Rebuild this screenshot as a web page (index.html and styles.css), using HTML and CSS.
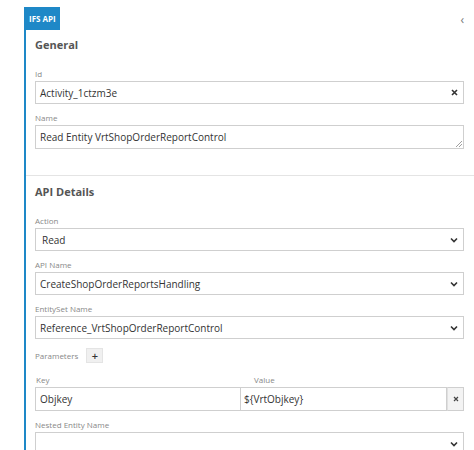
FILE: index.html
```html
<!DOCTYPE html>
<html>
<head>
<meta charset="utf-8">
<link rel="stylesheet" href="styles.css">
</head>
<body>
<div class="panel">
  <div class="topbar">
    <div class="tab">IFS API</div>
    <div class="collapse">‹</div>
  </div>
  <div class="section">
    <h2>General</h2>
    <div class="field">
      <div class="label">Id</div>
      <div class="input clearable">
        <span class="value">Activity_1ctzm3e</span>
        <svg class="clear" width="7" height="7" viewBox="0 0 7 7"><path d="M1 1L6 6M6 1L1 6" stroke="#333" stroke-width="1.6"/></svg>
      </div>
    </div>
    <div class="field">
      <div class="label">Name</div>
      <div class="input textarea">
        <span class="value">Read Entity VrtShopOrderReportControl</span>
        <svg class="grip" width="7" height="7" viewBox="0 0 7 7"><path d="M1 7L7 1M4 7L7 4" stroke="#888" stroke-width="0.8"/></svg>
      </div>
    </div>
  </div>
  <div class="section last">
    <h2>API Details</h2>
    <div class="field">
      <div class="label">Action</div>
      <div class="input select">
        <span class="value pad">Read</span>
        <svg class="chev" width="8" height="6" viewBox="0 0 8 6"><path d="M1 1.5L4 4.5L7 1.5" fill="none" stroke="#333" stroke-width="1.6"/></svg>
      </div>
    </div>
    <div class="field">
      <div class="label">API Name</div>
      <div class="input select">
        <span class="value">CreateShopOrderReportsHandling</span>
        <svg class="chev" width="8" height="6" viewBox="0 0 8 6"><path d="M1 1.5L4 4.5L7 1.5" fill="none" stroke="#333" stroke-width="1.6"/></svg>
      </div>
    </div>
    <div class="field">
      <div class="label">EntitySet Name</div>
      <div class="input select">
        <span class="value">Reference_VrtShopOrderReportControl</span>
        <svg class="chev" width="8" height="6" viewBox="0 0 8 6"><path d="M1 1.5L4 4.5L7 1.5" fill="none" stroke="#333" stroke-width="1.6"/></svg>
      </div>
    </div>
    <div class="params">
      <span class="label inline">Parameters</span>
      <span class="add">+</span>
    </div>
    <div class="kv-head">
      <div class="label key">Key</div>
      <div class="label val">Value</div>
    </div>
    <div class="kv-row">
      <div class="cell key"><span class="value">Objkey</span></div>
      <div class="cell val"><span class="value">${VrtObjkey}</span></div>
      <div class="cell del">
        <svg width="6" height="6" viewBox="0 0 6 6"><path d="M1 1L5 5M5 1L1 5" stroke="#444" stroke-width="1.2"/></svg>
      </div>
    </div>
    <div class="field">
      <div class="label">Nested Entity Name</div>
      <div class="input select">
        <span class="value"></span>
        <svg class="chev" width="8" height="6" viewBox="0 0 8 6"><path d="M1 1.5L4 4.5L7 1.5" fill="none" stroke="#333" stroke-width="1.6"/></svg>
      </div>
    </div>
  </div>
</div>
</body>
</html>
```

FILE: styles.css
```css
html, body {
  margin: 0;
  padding: 0;
  background: #ffffff;
}
body {
  font-family: "Open Sans", "Noto Sans", sans-serif;
  color: #333;
  overflow: hidden;
  height: 450px;
}
.panel {
  margin: 7px 0 0 24px;
  border-left: 2px solid #1e88c7;
  height: 443px;
  overflow: hidden;
}
.topbar {
  display: flex;
  justify-content: space-between;
  align-items: center;
  height: 23px;
}
.tab {
  background: #1e88c7;
  color: #fff;
  font-size: 8px;
  font-weight: 700;
  line-height: 23px;
  height: 23px;
  width: 34px;
  box-sizing: border-box;
  padding-left: 3px;
}
.collapse {
  color: #777;
  font-size: 12px;
  line-height: 12px;
  padding-right: 10px;
  margin-top: 3px;
}
.section {
  padding: 6px 10px 19px 9px;
  border-bottom: 1px solid #e4e4e4;
}
.section.last {
  border-bottom: none;
  padding-top: 7px;
}
h2 {
  margin: 0 0 13px;
  font-size: 11px;
  font-weight: 700;
  color: #555;
  line-height: 18px;
}
.label {
  font-size: 8px;
  color: #888;
  line-height: 13px;
  margin-bottom: 1px;
}
.field {
  margin-bottom: 7px;
}
.input {
  height: 23px;
  box-sizing: border-box;
  border: 1px solid #cfcfcf;
  display: flex;
  align-items: center;
  justify-content: space-between;
  padding: 0 7px 0 4px;
}
.clearable {
  padding-right: 5px;
}
.textarea {
  height: 24px;
  align-items: center;
  position: relative;
}
.value {
  font-size: 10px;
  color: #333;
}
.value.pad {
  padding-left: 2px;
}
.grip {
  position: absolute;
  right: 1px;
  bottom: 1px;
}
.select {
  padding-right: 5px;
}
.chev {
  display: block;
}
.params {
  display: flex;
  align-items: center;
  gap: 8px;
  margin: 9px 0 10px;
}
.label.inline {
  margin: 0;
  line-height: 15px;
}
.add {
  width: 17px;
  height: 15px;
  background: #f0f0f0;
  border: 1px solid #e4e4e4;
  box-sizing: border-box;
  font-size: 11px;
  line-height: 13px;
  text-align: center;
  color: #333;
  font-weight: 600;
}
.kv-head {
  display: flex;
}
.kv-head .key {
  width: 205px;
  padding-left: 1px;
}
.kv-head .val {
  padding-left: 13px;
}
.kv-row {
  display: flex;
  height: 24px;
  margin-bottom: 7px;
}
.cell {
  border: 1px solid #cfcfcf;
  box-sizing: border-box;
  display: flex;
  align-items: center;
  padding-left: 4px;
}
.cell.key {
  width: 206px;
}
.cell.val {
  flex: 1;
  border-left: none;
  padding-left: 3px;
}
.cell.del {
  width: 17px;
  border-left: 1px solid #e0e0e0;
  background: #f3f3f3;
  justify-content: center;
  padding: 0;
}
```
